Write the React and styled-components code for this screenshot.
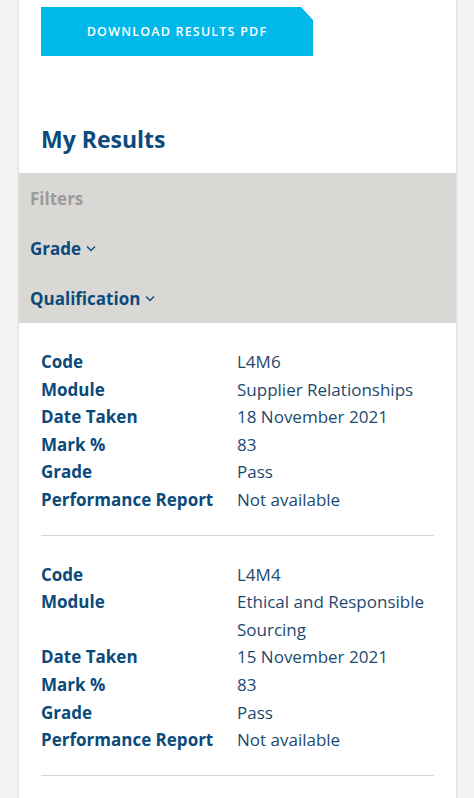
import React from "react";
import styled, { createGlobalStyle } from "styled-components";

const GlobalStyle = createGlobalStyle`
  body {
    margin: 0;
    background: #f3f3f3;
    font-family: "Open Sans", "Noto Sans", Arial, sans-serif;
  }
`;

const Page = styled.div`
  padding: 0 17px 0 18px;
  min-height: 798px;
  box-sizing: border-box;
`;

const Card = styled.div`
  background: #fff;
  border-left: 1px solid #e2e2e2;
  border-right: 1px solid #e2e2e2;
  box-shadow: 0 0 2px rgba(0, 0, 0, 0.06);
  min-height: 798px;
`;

const Top = styled.div`
  padding: 7px 22px 0 22px;
`;

const DownloadButton = styled.button`
  display: flex;
  align-items: center;
  justify-content: center;
  width: 272px;
  height: 49px;
  border: 0;
  background: #00b8ea;
  color: #fff;
  font-family: inherit;
  font-size: 12.5px;
  font-weight: 600;
  letter-spacing: 1.2px;
  text-transform: uppercase;
  clip-path: polygon(0 0, 260px 0, 100% 13px, 100% 100%, 0 100%);
  cursor: pointer;
`;

const Title = styled.h1`
  margin: 66px 0 0;
  font-size: 23px;
  line-height: 34px;
  font-weight: 700;
  color: #0b4a7b;
`;

const Filters = styled.div`
  margin-top: 17px;
  background: #d9d8d4;
  padding: 0 11px;
`;

const FilterItem = styled.div`
  height: 50px;
  display: flex;
  align-items: center;
  gap: 5px;
  font-size: 17px;
  font-weight: 700;
  color: ${(p) => (p.$muted ? "#9b9b9b" : "#0b4a7b")};
`;

const Chevron = () => (
  <svg width="10" height="7" viewBox="0 0 10 7" fill="none">
    <path d="M1 1.5 L5 5.5 L9 1.5" stroke="#0b4a7b" strokeWidth="1.3" />
  </svg>
);

const Results = styled.div`
  padding: 0 22px;
`;

const Result = styled.dl`
  margin: 0;
  padding: 25px 0 21px;
  border-bottom: 1px solid #d6d6d6;
  display: grid;
  grid-template-columns: 196px 1fr;
  font-size: 17px;
  line-height: 27.6px;
`;

const Label = styled.dt`
  font-weight: 700;
  color: #0b4a7b;
`;

const Value = styled.dd`
  margin: 0;
  color: #1e4a6e;
`;

const results = [
  {
    code: "L4M6",
    module: "Supplier Relationships",
    date: "18 November 2021",
    mark: "83",
    grade: "Pass",
    report: "Not available",
  },
  {
    code: "L4M4",
    module: "Ethical and Responsible Sourcing",
    date: "15 November 2021",
    mark: "83",
    grade: "Pass",
    report: "Not available",
  },
];

export default function App() {
  return (
    <>
      <GlobalStyle />
      <Page>
        <Card>
          <Top>
            <DownloadButton>Download results PDF</DownloadButton>
            <Title>My Results</Title>
          </Top>
          <Filters>
            <FilterItem $muted>Filters</FilterItem>
            <FilterItem>
              Grade <Chevron />
            </FilterItem>
            <FilterItem>
              Qualification <Chevron />
            </FilterItem>
          </Filters>
          <Results>
            {results.map((r) => (
              <Result key={r.code}>
                <Label>Code</Label>
                <Value>{r.code}</Value>
                <Label>Module</Label>
                <Value>{r.module}</Value>
                <Label>Date Taken</Label>
                <Value>{r.date}</Value>
                <Label>Mark %</Label>
                <Value>{r.mark}</Value>
                <Label>Grade</Label>
                <Value>{r.grade}</Value>
                <Label>Performance Report</Label>
                <Value>{r.report}</Value>
              </Result>
            ))}
          </Results>
        </Card>
      </Page>
    </>
  );
}
